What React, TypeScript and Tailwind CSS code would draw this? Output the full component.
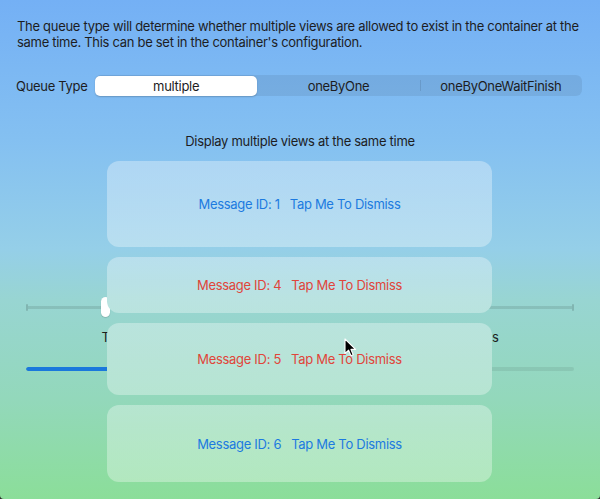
import React from 'react';

const CARDS = [
  { id: 1, h: 'h-[86px]', color: 'text-[#1c7ae0]' },
  { id: 4, h: 'h-[56px]', color: 'text-[#e0453a]' },
  { id: 5, h: 'h-[72px]', color: 'text-[#e0453a]' },
  { id: 6, h: 'h-[77px]', color: 'text-[#1c7ae0]' },
];

function Segmented() {
  return (
    <div className="flex-1 h-[21px] rounded-[6px] bg-black/[0.07] grid grid-cols-3 items-center">
      <div className="h-[20px] rounded-[5px] bg-white shadow-[0_0.5px_1.5px_rgba(0,0,0,0.2)] flex items-center justify-center text-[#1d1d1f]">
        multiple
      </div>
      <div className="h-full flex items-center justify-center text-[#1d1d1f]">oneByOne</div>
      <div className="h-full flex items-center justify-center text-[#1d1d1f] relative">
        <span className="absolute left-0 top-[5px] h-[11px] w-px bg-black/10" />
        oneByOneWaitFinish
      </div>
    </div>
  );
}

function Cursor() {
  return (
    <svg className="absolute left-[344px] top-[338px]" width="13" height="19" viewBox="0 0 13 19">
      <path d="M1 1 L1 15.5 L4.6 12.2 L7 17.8 L9.2 16.8 L6.9 11.4 L11.6 11.4 Z" fill="#000" stroke="#fff" strokeWidth="1.1" strokeLinejoin="round" />
    </svg>
  );
}

export default function App() {
  return (
    <div className="w-[600px] h-[499px] bg-[#2a2a2a]" style={{ fontFamily: 'Inter, "Liberation Sans", sans-serif' }}>
      <div className="relative w-full h-full overflow-hidden rounded-b-[4px] bg-[linear-gradient(180deg,#74b0f5_0%,#84c0f1_28%,#95cfe8_50%,#98d5d2_60%,#93d8bb_80%,#8bde99_100%)] text-[13px] leading-[16px] tracking-[-0.3px] text-[#1d1d1f]">
        {/* Description */}
        <p className="pt-[18px] px-[17px]">
          The queue type will determine whether multiple views are allowed to exist in the container at the same time. This can be set in the container's configuration.
        </p>

        {/* Queue type picker */}
        <div className="mt-[25px] flex items-center pl-[16px] pr-[18px]">
          <span className="w-[79px] shrink-0">Queue Type</span>
          <Segmented />
        </div>

        <p className="mt-[37px] text-center">Display multiple views at the same time</p>

        {/* Slider */}
        <div className="mt-[148px] px-[26px] h-[20px] flex items-center">
          <div className="relative w-full h-full flex items-center">
            <span className="w-[2px] h-[7px] bg-black/15 rounded-full" />
            <span className="flex-1 h-[3px] bg-black/10" />
            <span className="w-[2px] h-[7px] bg-black/15 rounded-full" />
            <span className="absolute left-[75px] top-0 w-[9px] h-[20px] rounded-full bg-white shadow-[0_0.5px_1px_rgba(0,0,0,0.25)]" />
          </div>
        </div>

        <p className="mt-[12px] text-center">The progress bar shows the remaining display time of current views</p>

        {/* Progress */}
        <div className="mt-[22px] px-[26px]">
          <div className="h-[4px] rounded-full bg-black/[0.07] overflow-hidden">
            <div className="h-full w-[20%] rounded-full bg-[#1a78dc]" />
          </div>
        </div>

        {/* Queued views */}
        <div className="absolute top-[161px] left-[107px] w-[385px] flex flex-col gap-[10px]">
          {CARDS.map(c => (
            <div
              key={c.id}
              className={`${c.h} rounded-[12px] bg-fixed bg-[linear-gradient(rgba(255,255,255,0.33),rgba(255,255,255,0.33)),linear-gradient(180deg,#74b0f5_0%,#84c0f1_28%,#95cfe8_50%,#98d5d2_60%,#93d8bb_80%,#8bde99_100%)] flex items-center justify-center gap-[10px] ${c.color}`}
            >
              <span>Message ID: {c.id}</span>
              <span>Tap Me To Dismiss</span>
            </div>
          ))}
        </div>

        <Cursor />
      </div>
    </div>
  );
}
